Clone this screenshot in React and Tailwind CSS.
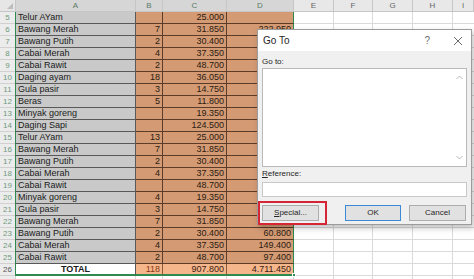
import React from 'react';

// D values for rows 7–21 sit under the Go To dialog and are not shown
const rows = [
  [5, 'Telur AYam', '', '25.000', ''],
  [6, 'Bawang Merah', '7', '31.850', '222.950'],
  [7, 'Bawang Putih', '2', '30.400', ''],
  [8, 'Cabai Merah', '4', '37.350', ''],
  [9, 'Cabai Rawit', '2', '48.700', ''],
  [10, 'Daging ayam', '18', '36.050', ''],
  [11, 'Gula pasir', '3', '14.750', ''],
  [12, 'Beras', '5', '11.800', ''],
  [13, 'Minyak goreng', '', '19.350', ''],
  [14, 'Daging Sapi', '', '124.500', ''],
  [15, 'Telur AYam', '13', '25.000', ''],
  [16, 'Bawang Merah', '7', '31.850', ''],
  [17, 'Bawang Putih', '2', '30.400', ''],
  [18, 'Cabai Merah', '4', '37.350', ''],
  [19, 'Cabai Rawit', '', '48.700', ''],
  [20, 'Minyak goreng', '4', '19.350', ''],
  [21, 'Gula pasir', '3', '14.750', ''],
  [22, 'Bawang Merah', '7', '31.850', '222.950'],
  [23, 'Bawang Putih', '2', '30.400', '60.800'],
  [24, 'Cabai Merah', '4', '37.350', '149.400'],
  [25, 'Cabai Rawit', '2', '48.700', '97.400'],
];

const gridCols = 'grid grid-cols-[16px_120px_27px_64px_67px_40px_39px_40px_40px_1fr]';

const Blank = ({ last }) => (
  <div className={`h-[12px] bg-white border-b border-[#dadada] ${last ? '' : 'border-r'}`} />
);

const Orange = ({ children, right }) => (
  <div
    className={`h-[12px] bg-[#d49a74] border-b border-r ${right ? 'border-r-[#2f8a4f]' : 'border-r-[#5b3c28]'} border-b-[#5b3c28] text-right pr-[2px] leading-[11px] text-[9px] text-[#2a1a10]`}
  >
    {children}
  </div>
);

const Row = ({ n, a, b, c, d }) => (
  <>
    <div className="h-[12px] bg-[#ececec] border-b border-r border-[#d0d0d0] text-center leading-[11px] text-[8px] text-[#6f9a7c]">
      {n}
    </div>
    <div className="h-[12px] bg-[#c9c9c9] border-b border-r border-b-[#595959] border-r-[#595959] border-l border-l-[#2f8a4f] pl-[2px] leading-[11px] text-[9px] text-[#1a1a1a] -ml-px">
      {a}
    </div>
    <Orange>{b}</Orange>
    <Orange>{c}</Orange>
    <Orange right>{d}</Orange>
    <Blank />
    <Blank />
    <Blank />
    <Blank />
    <Blank last />
  </>
);

const Chevron = ({ down }) => (
  <svg width="7" height="5" viewBox="0 0 7 5" className="text-[#b5b5b5]">
    <path d={down ? 'M0.5 1 L3.5 4 L6.5 1' : 'M0.5 4 L3.5 1 L6.5 4'} fill="none" stroke="currentColor" strokeWidth="1" />
  </svg>
);

const GoToDialog = () => (
  <div className="absolute left-[257px] top-[29px] w-[215px] h-[196px] bg-[#f0f0f0] border border-[#9c9c9c] shadow-[2px_3px_6px_rgba(0,0,0,0.25)] flex flex-col font-['Liberation_Sans',sans-serif] text-[#262626]">
    <div className="h-[21px] bg-white flex items-center pl-[5px] pr-[8px]">
      <span className="text-[10px] flex-1">Go To</span>
      <span className="text-[10px] text-[#707070] mr-[23px]">?</span>
      <svg width="10" height="10" viewBox="0 0 10 10" className="text-[#6a6a6a]">
        <path d="M1 1 L9 9 M9 1 L1 9" stroke="currentColor" strokeWidth="1" />
      </svg>
    </div>
    <div className="flex flex-col px-[4px]">
      <div className="text-[8px] leading-[10px] pt-[6px] pb-px">Go to:</div>
      <div className="h-[99px] bg-white border border-[#b9b9b9] flex flex-col items-end justify-between pr-[3px] py-[6px]">
        <Chevron />
        <Chevron down />
      </div>
      <div className="text-[8px] leading-[10px] pt-[2px] pb-[3px] first-letter:underline">Reference:</div>
      <div className="h-[15px] bg-white border border-[#c8c8c8]" />
      <div className="flex justify-between mt-[8px] pr-[1px]">
        <div className="relative">
          <div className="w-[57px] h-[16px] bg-[#e1e1e1] border border-[#adadad] text-center leading-[14px] text-[8px] first-letter:underline">
            Special...
          </div>
          <div className="absolute left-[-4px] top-[-4px] w-[69px] h-[24px] border-2 border-[#d42634]" />
        </div>
        <div className="flex gap-[8px]">
          <div className="w-[56px] h-[16px] bg-[#e1e1e1] border border-[#3c8ad6] flex items-center justify-center text-[8px]">
            OK
          </div>
          <div className="w-[57px] h-[16px] bg-[#e1e1e1] border border-[#adadad] flex items-center justify-center text-[8px]">
            Cancel
          </div>
        </div>
      </div>
    </div>
  </div>
);

export default function App() {
  const headers = ['A', 'B', 'C', 'D', 'E', 'F', 'G', 'H', 'I'];
  return (
    <div className="relative w-[474px] h-[279px] overflow-hidden bg-white font-['Liberation_Sans',sans-serif]">
      <div className={gridCols}>
        <div className="h-[12px] bg-[#e6e6e6] border-b border-r border-[#c6c6c6] flex items-end justify-end pr-[2px] pb-[2px]">
          <svg width="6" height="6" viewBox="0 0 6 6">
            <path d="M6 0 L6 6 L0 6 Z" fill="#bdbdbd" />
          </svg>
        </div>
        {headers.map((h, i) => (
          <div
            key={h}
            className={`h-[12px] border-b border-r border-[#c6c6c6] text-center leading-[11px] text-[8px] ${
              i < 4 ? 'bg-[#d6d6d6] text-[#5a7a66]' : 'bg-[#e8e8e8] text-[#666666]'
            }`}
          >
            {h}
          </div>
        ))}

        {rows.map(([n, a, b, c, d]) => (
          <Row key={n} n={n} a={a} b={b} c={c} d={d} />
        ))}

        <div className="h-[12px] bg-[#ececec] border-b border-r border-[#d0d0d0] text-center leading-[11px] text-[8px] text-[#555555]">
          26
        </div>
        <div className="h-[12px] bg-white border-b-2 border-b-[#2f8a4f] border-r border-r-[#595959] border-l border-l-[#2f8a4f] -ml-px text-center font-bold leading-[11px] text-[9px] text-[#1a1a1a]">
          TOTAL
        </div>
        <div className="h-[12px] bg-[#f6b68c] border-b-2 border-b-[#2f8a4f] border-r border-r-[#8a5a3a] text-right pr-[2px] leading-[11px] text-[9px] text-[#8a3a14]">
          118
        </div>
        <div className="h-[12px] bg-[#f6b68c] border-b-2 border-b-[#2f8a4f] border-r border-r-[#8a5a3a] text-right pr-[2px] leading-[11px] text-[9px] text-[#3a2010]">
          907.800
        </div>
        <div className="relative h-[12px] bg-[#f6b68c] border-b-2 border-b-[#2f8a4f] border-r border-r-[#2f8a4f] text-right pr-[2px] leading-[11px] text-[9px] text-[#3a2010]">
          4.711.450
          <div className="absolute right-[-3px] bottom-[-3px] w-[4px] h-[4px] bg-[#2f8a4f] border border-white" />
        </div>
        <Blank />
        <Blank />
        <Blank />
        <Blank />
        <Blank last />

        <div className="h-[12px] bg-[#ececec] border-r border-[#d0d0d0]" />
        {headers.map((h) => (
          <div key={h} className="h-[12px] bg-white border-r border-[#dadada]" />
        ))}
      </div>
      <GoToDialog />
    </div>
  );
}
